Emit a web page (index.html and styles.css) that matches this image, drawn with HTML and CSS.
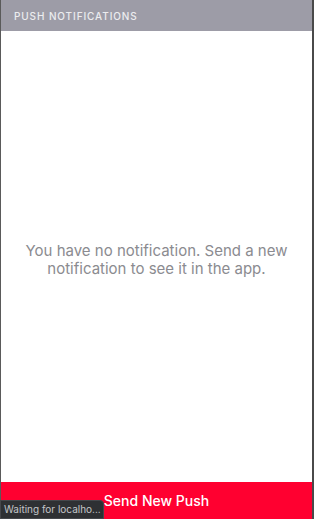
FILE: index.html
```html
<!DOCTYPE html>
<html lang="en">
<head>
  <meta charset="UTF-8" />
  <meta name="viewport" content="width=device-width, initial-scale=1.0" />
  <title>Push Notifications</title>
  <link rel="stylesheet" href="styles.css">
</head>
<body>
  <div class="app">
    <div class="header">PUSH NOTIFICATIONS</div>

    <div class="content">
      <p class="empty">You have no notification. Send a new notification to see it in the app.</p>
    </div>

    <button class="send-btn">Send New Push</button>

    <!-- browser status bubble -->
    <div class="status">Waiting for localho...</div>
  </div>
</body>
</html>
```

FILE: styles.css
```css
* {
  box-sizing: border-box;
}
body {
  margin: 0;
  background: #fff;
  font-family: 'Inter', 'Roboto', sans-serif;
  overflow: hidden;
}

.app {
  width: 314px;
  height: 519px;
  border-left: 1px solid #5a5a5a;
  border-right: 2px solid #4a4a4a;
  display: flex;
  flex-direction: column;
  position: relative;
}

.header {
  height: 31px;
  flex-shrink: 0;
  background: #9d9ca7;
  color: #ececef;
  font-size: 10px;
  font-weight: 500;
  letter-spacing: 0.9px;
  padding-left: 13px;
  display: flex;
  align-items: center;
}

.content {
  flex: 1;
  display: flex;
  align-items: center;
  justify-content: center;
  padding: 6px 20px 0;
}

.empty {
  margin: 0;
  text-align: center;
  color: #8b8b90;
  font-size: 15px;
  line-height: 18px;
}

.send-btn {
  height: 37px;
  flex-shrink: 0;
  border: none;
  background: #ff0030;
  color: #fff;
  font-family: inherit;
  font-size: 14px;
  font-weight: 500;
  padding: 0;
}

.status {
  position: absolute;
  left: -1px;
  bottom: 0;
  width: 104px;
  height: 19px;
  background: #2e3033;
  border: 1px solid #45474b;
  border-radius: 0 4px 0 0;
  color: #c4c6c9;
  font-size: 10px;
  line-height: 17px;
  padding-left: 3px;
  white-space: nowrap;
}
```
